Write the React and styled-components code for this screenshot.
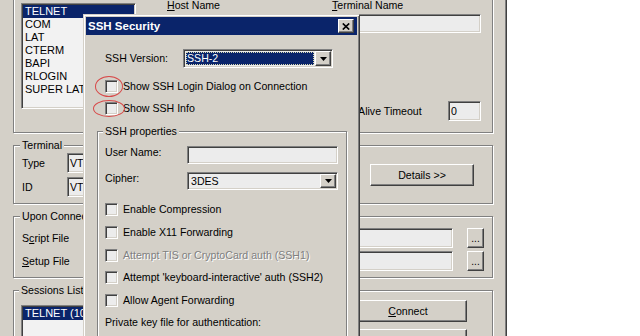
import React from "react";
import styled, { createGlobalStyle, css } from "styled-components";

const FACE = "#d4d0c8";
const SHADOW = "#808080";
const DARK = "#404040";
const NAVY = "#0a246a";
const FIELD = "#ececec";

const sunken = css`
  border: 1px solid;
  border-color: ${SHADOW} #ffffff #ffffff ${SHADOW};
  box-shadow: inset 1px 1px 0 ${DARK}, inset -1px -1px 0 ${FACE};
`;

const raised = css`
  border: 1px solid;
  border-color: #ffffff ${DARK} ${DARK} #ffffff;
  box-shadow: inset -1px -1px 0 ${SHADOW}, inset 1px 1px 0 ${FACE};
`;

const GlobalStyle = createGlobalStyle`
  *, *::before, *::after { box-sizing: border-box; }
  html, body { margin: 0; padding: 0; background: #ffffff; }
  body {
    font-family: "Liberation Sans", Arial, sans-serif;
    font-size: 10.6px;
    line-height: 13px;
    color: #000000;
  }
`;

const Screen = styled.div`
  position: relative;
  width: 640px;
  height: 336px;
  overflow: hidden;
  display: flex;
  background: #ffffff;
`;

const MainWindow = styled.div`
  flex: none;
  width: 507px;
  height: 100%;
  background: ${FACE};
  border-right: 1px solid ${DARK};
  box-shadow: inset -1px 0 0 ${SHADOW};
  padding: 0 13px;
  display: flex;
  flex-direction: column;
  gap: 6px;
`;

const GroupBox = styled.fieldset`
  flex: none;
  margin: ${(p) => p.$mt || 0}px 0 0 0;
  min-width: 0;
  height: ${(p) => p.$h}px;
  padding: ${(p) => p.$pad};
  border: 1px solid ${SHADOW};
  box-shadow: inset 1px 1px 0 #ffffff, 1px 1px 0 #ffffff;
`;

const Legend = styled.legend`
  padding: 0 2px;
  margin-left: -2px;
  line-height: 13px;
  background: ${FACE};
`;

const TopContent = styled.div`
  display: flex;
  align-items: flex-start;
`;

const ListBox = styled.div`
  ${sunken};
  flex: none;
  width: ${(p) => p.$w}px;
  height: ${(p) => p.$h}px;
  margin-top: ${(p) => p.$mt || 0}px;
  padding: 1px;
  background: #f2f2f2;
  overflow: hidden;
`;

const ListItem = styled.div`
  height: 13px;
  line-height: 13px;
  padding-left: 2px;
  white-space: nowrap;
  font-size: 11px;
  background: ${(p) => (p.$selected ? NAVY : "transparent")};
  color: ${(p) => (p.$selected ? "#ffffff" : "#000000")};
`;

const FieldsArea = styled.div`
  margin-left: 29px;
  display: flex;
  flex-direction: column;
`;

const FieldPair = styled.div`
  display: flex;
  gap: 16px;
`;

const LabeledField = styled.div`
  display: flex;
  flex-direction: column;
  gap: 2px;
  width: ${(p) => p.$w}px;
`;

const FieldLabel = styled.span`
  padding-left: 2px;
  white-space: nowrap;
`;

const TextBox = styled.div`
  ${sunken};
  flex: ${(p) => (p.$grow ? "1 1 auto" : "none")};
  width: ${(p) => (p.$w ? `${p.$w}px` : "auto")};
  height: ${(p) => p.$h}px;
  background: ${FIELD};
  padding: 0 2px;
  display: flex;
  align-items: center;
  white-space: nowrap;
  overflow: hidden;
`;

const AliveRow = styled.div`
  margin-top: 68px;
  margin-left: 166px;
  width: 150px;
  display: flex;
  align-items: center;
  justify-content: space-between;
`;

const SplitRow = styled.div`
  display: flex;
  align-items: ${(p) => p.$align || "center"};
  justify-content: space-between;
`;

const FormColumn = styled.div`
  display: flex;
  flex-direction: column;
  gap: ${(p) => p.$gap}px;
`;

const FormRow = styled.div`
  display: flex;
  align-items: center;
`;

const RowLabel = styled.span`
  flex: none;
  width: ${(p) => p.$w}px;
  white-space: nowrap;
`;

const PushButton = styled.div`
  ${raised};
  flex: none;
  width: ${(p) => p.$w}px;
  height: ${(p) => p.$h}px;
  background: ${FACE};
  display: flex;
  align-items: center;
  justify-content: center;
  white-space: nowrap;
`;

const SmallButton = styled.div`
  ${raised};
  flex: none;
  width: 17px;
  height: 20px;
  margin-left: 14px;
  background: ${FACE};
  display: flex;
  align-items: flex-end;
  justify-content: center;
  padding-bottom: 3px;
  font-size: 10px;
  line-height: 10px;
`;

const ButtonColumn = styled.div`
  display: flex;
  flex-direction: column;
  gap: 7px;
`;

const Dialog = styled.div`
  position: absolute;
  left: 83px;
  top: 14px;
  width: 277px;
  height: 340px;
  background: ${FACE};
  border: 1px solid;
  border-color: ${FACE} ${DARK} ${DARK} ${FACE};
  box-shadow: inset 1px 1px 0 #ffffff, inset -1px -1px 0 ${SHADOW};
  padding: 2px;
  display: flex;
  flex-direction: column;
`;

const TitleBar = styled.div`
  flex: none;
  height: 18px;
  background: ${NAVY};
  color: #ffffff;
  display: flex;
  align-items: center;
  justify-content: space-between;
  padding: 0 3px 0 2px;
`;

const TitleText = styled.span`
  font-weight: bold;
  font-size: 11.5px;
`;

const CloseButton = styled.div`
  ${raised};
  width: 16px;
  height: 14px;
  background: ${FACE};
  display: flex;
  align-items: center;
  justify-content: center;
`;

const DialogBody = styled.div`
  flex: 1;
  display: flex;
  flex-direction: column;
  padding: 14px 10px 0 11px;
`;

const VersionRow = styled.div`
  display: flex;
  align-items: center;
  margin-left: 8px;
`;

const Select = styled.div`
  ${sunken};
  flex: none;
  width: ${(p) => p.$w}px;
  height: ${(p) => p.$h}px;
  background: ${FIELD};
  padding: 1px;
  display: flex;
  align-items: stretch;
`;

const SelectValue = styled.div`
  flex: 1;
  margin: ${(p) => (p.$selected ? "1px" : "0")};
  padding-left: ${(p) => (p.$selected ? "1px" : "2px")};
  display: flex;
  align-items: center;
  background: ${(p) => (p.$selected ? NAVY : "transparent")};
  color: ${(p) => (p.$selected ? "#ffffff" : "#000000")};
  outline: ${(p) => (p.$selected ? "1px dotted #d8d8b0" : "none")};
  outline-offset: -1px;
`;

const DropButton = styled.div`
  ${raised};
  flex: none;
  width: 16px;
  background: ${FACE};
  display: flex;
  align-items: center;
  justify-content: center;
`;

const CheckRow = styled.div`
  display: flex;
  align-items: center;
  margin-top: ${(p) => p.$mt}px;
  margin-left: ${(p) => p.$indent || 0}px;
`;

const CheckBox = styled.div`
  ${sunken};
  flex: none;
  width: 13px;
  height: 13px;
  background: ${FIELD};
`;

const CheckLabel = styled.span`
  margin-left: 5px;
  white-space: nowrap;
  color: ${(p) => (p.$disabled ? SHADOW : "#000000")};
  text-shadow: ${(p) => (p.$disabled ? "1px 1px 0 #ffffff" : "none")};
`;

const PropRow = styled.div`
  display: flex;
  align-items: flex-start;
  margin-top: ${(p) => p.$mt || 0}px;
`;

const PropLabel = styled.span`
  flex: none;
  width: 82px;
  white-space: nowrap;
`;

const PlainText = styled.div`
  margin-top: ${(p) => p.$mt}px;
  white-space: nowrap;
`;

const Ellipse = styled.div`
  position: absolute;
  left: ${(p) => p.$x}px;
  top: ${(p) => p.$y}px;
  width: ${(p) => p.$w}px;
  height: ${(p) => p.$h}px;
  border: 1px solid #d84848;
  border-radius: 50%;
  pointer-events: none;
`;

const Arrow = () => (
  <svg width="7" height="4" viewBox="0 0 7 4">
    <polygon points="0,0 7,0 3.5,4" fill="#000" />
  </svg>
);

const CloseGlyph = () => (
  <svg width="8" height="7" viewBox="0 0 8 7">
    <path d="M0.8 0.5 L7.2 6.5 M7.2 0.5 L0.8 6.5" stroke="#000" strokeWidth="1.7" fill="none" />
  </svg>
);

const protocols = ["TELNET", "COM", "LAT", "CTERM", "BAPI", "RLOGIN", "SUPER LAT"];

const sshOptions = [
  { label: "Enable Compression", mt: 13 },
  { label: "Enable X11 Forwarding", mt: 10 },
  { label: "Attempt TIS or CryptoCard auth (SSH1)", mt: 10, disabled: true },
  { label: "Attempt 'keyboard-interactive' auth (SSH2)", mt: 9 },
  { label: "Allow Agent Forwarding", mt: 10 },
];

export default function App() {
  return (
    <>
      <GlobalStyle />
      <Screen>
        <MainWindow>
          <GroupBox $mt={-16} $h={149} $pad="14px 10px 0 7px">
            <TopContent>
              <ListBox $w={115} $h={106} $mt={4}>
                {protocols.map((p, i) => (
                  <ListItem key={p} $selected={i === 0}>
                    {p}
                  </ListItem>
                ))}
              </ListBox>
              <FieldsArea>
                <FieldPair>
                  <LabeledField $w={149}>
                    <FieldLabel>
                      <u>H</u>ost Name
                    </FieldLabel>
                    <TextBox $w={149} $h={19} />
                  </LabeledField>
                  <LabeledField $w={151}>
                    <FieldLabel>
                      <u>T</u>erminal Name
                    </FieldLabel>
                    <TextBox $w={151} $h={19} />
                  </LabeledField>
                </FieldPair>
                <AliveRow>
                  <span>Keep Alive Timeout</span>
                  <TextBox $w={33} $h={20}>0</TextBox>
                </AliveRow>
              </FieldsArea>
            </TopContent>
          </GroupBox>

          <GroupBox $h={65} $pad="1px 18px 0 8px">
            <Legend>Terminal</Legend>
            <SplitRow>
              <FormColumn $gap={4}>
                <FormRow>
                  <RowLabel $w={45}>Type</RowLabel>
                  <TextBox $w={130} $h={20}>VT100</TextBox>
                </FormRow>
                <FormRow>
                  <RowLabel $w={45}>ID</RowLabel>
                  <TextBox $w={130} $h={20}>VT100</TextBox>
                </FormRow>
              </FormColumn>
              <PushButton $w={104} $h={22}>Details &gt;&gt;</PushButton>
            </SplitRow>
          </GroupBox>

          <GroupBox $h={68} $pad="5px 8px 0 8px">
            <Legend>Upon Connection</Legend>
            <FormColumn $gap={3}>
              <FormRow>
                <RowLabel $w={63}>
                  S<u>c</u>ript File
                </RowLabel>
                <TextBox $grow $h={20} />
                <SmallButton>...</SmallButton>
              </FormRow>
              <FormRow>
                <RowLabel $w={63}>
                  <u>S</u>etup File
                </RowLabel>
                <TextBox $grow $h={20} />
                <SmallButton>...</SmallButton>
              </FormRow>
            </FormColumn>
          </GroupBox>

          <GroupBox $h={80} $pad="3px 25px 0 7px">
            <Legend>Sessions List</Legend>
            <SplitRow $align="flex-start">
              <ListBox $w={160} $h={70} $mt={5}>
                <ListItem $selected>TELNET (10.1.1.20)</ListItem>
              </ListBox>
              <ButtonColumn>
                <PushButton $w={118} $h={22}>
                  <span>
                    <u>C</u>onnect
                  </span>
                </PushButton>
                <PushButton $w={118} $h={22}>
                  Disconnect
                </PushButton>
              </ButtonColumn>
            </SplitRow>
          </GroupBox>
        </MainWindow>

        <Dialog>
          <TitleBar>
            <TitleText>SSH Security</TitleText>
            <CloseButton>
              <CloseGlyph />
            </CloseButton>
          </TitleBar>
          <DialogBody>
            <VersionRow>
              <RowLabel $w={78}>SSH Version:</RowLabel>
              <Select $w={150} $h={19}>
                <SelectValue $selected>SSH-2</SelectValue>
                <DropButton>
                  <Arrow />
                </DropButton>
              </Select>
            </VersionRow>
            <CheckRow $mt={12} $indent={8}>
              <CheckBox />
              <CheckLabel>Show SSH Login Dialog on Connection</CheckLabel>
            </CheckRow>
            <CheckRow $mt={9} $indent={8}>
              <CheckBox />
              <CheckLabel>Show SSH Info</CheckLabel>
            </CheckRow>
            <GroupBox $mt={10} $h={230} $pad="8px 8px 0 7px">
              <Legend>SSH properties</Legend>
              <PropRow>
                <PropLabel>User Name:</PropLabel>
                <TextBox $w={151} $h={18} />
              </PropRow>
              <PropRow $mt={8}>
                <PropLabel>Cipher:</PropLabel>
                <Select $w={151} $h={18}>
                  <SelectValue>3DES</SelectValue>
                  <DropButton>
                    <Arrow />
                  </DropButton>
                </Select>
              </PropRow>
              {sshOptions.map((o) => (
                <CheckRow key={o.label} $mt={o.mt}>
                  <CheckBox />
                  <CheckLabel $disabled={o.disabled}>{o.label}</CheckLabel>
                </CheckRow>
              ))}
              <PlainText $mt={9}>Private key file for authentication:</PlainText>
            </GroupBox>
          </DialogBody>
        </Dialog>

        <Ellipse $x={95} $y={76} $w={28} $h={21} />
        <Ellipse $x={93} $y={100} $w={32} $h={17} />
      </Screen>
    </>
  );
}
